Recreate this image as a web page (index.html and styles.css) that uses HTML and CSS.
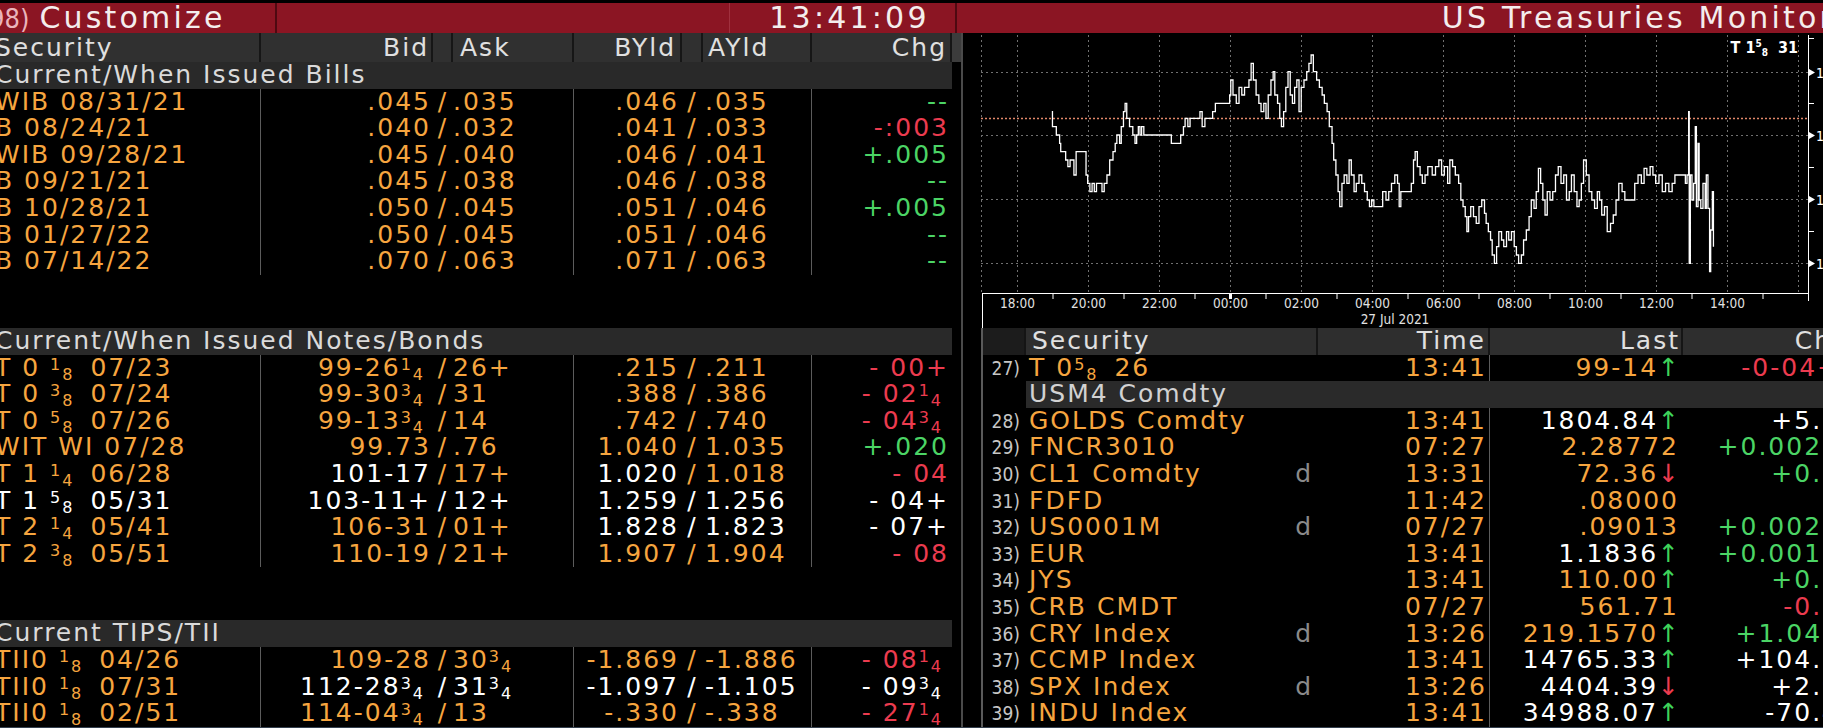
FILE: index.html
```html
<!DOCTYPE html>
<html>
<head>
<meta charset="utf-8">
<title>US Treasuries Monitor</title>
<link rel="stylesheet" href="styles.css">
</head>
<body>
<div class="topbar">
  <div class="seg seg1"><span class="ref">98)</span><span class="ttl">Customize</span></div>
  <div class="seg seg2"></div>
  <div class="seg seg3">13:41:09</div>
  <div class="seg seg4">US Treasuries Monitor</div>
</div>
<div class="main">
  <div class="left">
    <div class="lhead">
      <div class="h-sec">Security</div><div class="h-bid">Bid</div><div class="h-gap"></div><div class="h-ask">Ask</div><div class="h-by">BYld</div><div class="h-gap"></div><div class="h-ay">AYld</div><div class="h-chg">Chg</div><div class="h-strip"></div>
    </div>

    <div class="lsec">Current/When Issued Bills</div>
    <div class="lrow"><div class="sec">WIB 08/31/21</div><div class="bid">.045</div><div class="sl">/</div><div class="ask">.035</div><div class="by">.046</div><div class="sl">/</div><div class="ay">.035</div><div class="chg g">--</div></div>
    <div class="lrow"><div class="sec">B 08/24/21</div><div class="bid">.040</div><div class="sl">/</div><div class="ask">.032</div><div class="by">.041</div><div class="sl">/</div><div class="ay">.033</div><div class="chg r">-:003</div></div>
    <div class="lrow"><div class="sec">WIB 09/28/21</div><div class="bid">.045</div><div class="sl">/</div><div class="ask">.040</div><div class="by">.046</div><div class="sl">/</div><div class="ay">.041</div><div class="chg g">+.005</div></div>
    <div class="lrow"><div class="sec">B 09/21/21</div><div class="bid">.045</div><div class="sl">/</div><div class="ask">.038</div><div class="by">.046</div><div class="sl">/</div><div class="ay">.038</div><div class="chg g">--</div></div>
    <div class="lrow"><div class="sec">B 10/28/21</div><div class="bid">.050</div><div class="sl">/</div><div class="ask">.045</div><div class="by">.051</div><div class="sl">/</div><div class="ay">.046</div><div class="chg g">+.005</div></div>
    <div class="lrow"><div class="sec">B 01/27/22</div><div class="bid">.050</div><div class="sl">/</div><div class="ask">.045</div><div class="by">.051</div><div class="sl">/</div><div class="ay">.046</div><div class="chg g">--</div></div>
    <div class="lrow"><div class="sec">B 07/14/22</div><div class="bid">.070</div><div class="sl">/</div><div class="ask">.063</div><div class="by">.071</div><div class="sl">/</div><div class="ay">.063</div><div class="chg g">--</div></div>
    <div class="lgap"></div>

    <div class="lsec">Current/When Issued Notes/Bonds</div>
    <div class="lrow"><div class="sec">T 0 <span class="fr"><i>1</i><b>8</b></span> 07/23</div><div class="bid">99-26<span class="fr"><i>1</i><b>4</b></span></div><div class="sl">/</div><div class="ask">26+</div><div class="by">.215</div><div class="sl">/</div><div class="ay">.211</div><div class="chg r">- 00+</div></div>
    <div class="lrow"><div class="sec">T 0 <span class="fr"><i>3</i><b>8</b></span> 07/24</div><div class="bid">99-30<span class="fr"><i>3</i><b>4</b></span></div><div class="sl">/</div><div class="ask">31</div><div class="by">.388</div><div class="sl">/</div><div class="ay">.386</div><div class="chg r">- 02<span class="fr"><i>1</i><b>4</b></span></div></div>
    <div class="lrow"><div class="sec">T 0 <span class="fr"><i>5</i><b>8</b></span> 07/26</div><div class="bid">99-13<span class="fr"><i>3</i><b>4</b></span></div><div class="sl">/</div><div class="ask">14</div><div class="by">.742</div><div class="sl">/</div><div class="ay">.740</div><div class="chg r">- 04<span class="fr"><i>3</i><b>4</b></span></div></div>
    <div class="lrow"><div class="sec">WIT WI 07/28</div><div class="bid">99.73</div><div class="sl">/</div><div class="ask">.76</div><div class="by">1.040</div><div class="sl">/</div><div class="ay">1.035</div><div class="chg g">+.020</div></div>
    <div class="lrow"><div class="sec">T 1 <span class="fr"><i>1</i><b>4</b></span> 06/28</div><div class="bid w">101-17</div><div class="sl">/</div><div class="ask">17+</div><div class="by w">1.020</div><div class="sl">/</div><div class="ay">1.018</div><div class="chg r">- 04</div></div>
    <div class="lrow"><div class="sec w">T 1 <span class="fr"><i>5</i><b>8</b></span> 05/31</div><div class="bid w">103-11+</div><div class="sl w">/</div><div class="ask w">12+</div><div class="by w">1.259</div><div class="sl w">/</div><div class="ay w">1.256</div><div class="chg w">- 04+</div></div>
    <div class="lrow"><div class="sec">T 2 <span class="fr"><i>1</i><b>4</b></span> 05/41</div><div class="bid">106-31</div><div class="sl">/</div><div class="ask">01+</div><div class="by w">1.828</div><div class="sl w">/</div><div class="ay w">1.823</div><div class="chg w">- 07+</div></div>
    <div class="lrow"><div class="sec">T 2 <span class="fr"><i>3</i><b>8</b></span> 05/51</div><div class="bid">110-19</div><div class="sl">/</div><div class="ask">21+</div><div class="by">1.907</div><div class="sl">/</div><div class="ay">1.904</div><div class="chg r">- 08</div></div>
    <div class="lgap"></div>

    <div class="lsec">Current TIPS/TII</div>
    <div class="lrow"><div class="sec">TII0 <span class="fr"><i>1</i><b>8</b></span> 04/26</div><div class="bid">109-28</div><div class="sl">/</div><div class="ask">30<span class="fr"><i>3</i><b>4</b></span></div><div class="by">-1.869</div><div class="sl">/</div><div class="ay">-1.886</div><div class="chg r">- 08<span class="fr"><i>1</i><b>4</b></span></div></div>
    <div class="lrow"><div class="sec">TII0 <span class="fr"><i>1</i><b>8</b></span> 07/31</div><div class="bid w">112-28<span class="fr"><i>3</i><b>4</b></span></div><div class="sl w">/</div><div class="ask w">31<span class="fr"><i>3</i><b>4</b></span></div><div class="by w">-1.097</div><div class="sl w">/</div><div class="ay w">-1.105</div><div class="chg w">- 09<span class="fr"><i>3</i><b>4</b></span></div></div>
    <div class="lrow"><div class="sec">TII0 <span class="fr"><i>1</i><b>8</b></span> 02/51</div><div class="bid">114-04<span class="fr"><i>3</i><b>4</b></span></div><div class="sl">/</div><div class="ask">13</div><div class="by">-.330</div><div class="sl">/</div><div class="ay">-.338</div><div class="chg r">- 27<span class="fr"><i>1</i><b>4</b></span></div></div>
  </div>

  <div class="right">
    <svg class="chart" width="860" height="295" viewBox="0 0 860 295">
      <g class="grid">
        <line x1="18.5" y1="2" x2="18.5" y2="260"/>
        <line x1="54.5" y1="2" x2="54.5" y2="260"/>
        <line x1="125.5" y1="2" x2="125.5" y2="260"/>
        <line x1="196.5" y1="2" x2="196.5" y2="260"/>
        <line x1="267.5" y1="2" x2="267.5" y2="260"/>
        <line x1="338.5" y1="2" x2="338.5" y2="260"/>
        <line x1="409.5" y1="2" x2="409.5" y2="260"/>
        <line x1="480.5" y1="2" x2="480.5" y2="260"/>
        <line x1="551.5" y1="2" x2="551.5" y2="260"/>
        <line x1="622.5" y1="2" x2="622.5" y2="260"/>
        <line x1="693.5" y1="2" x2="693.5" y2="260"/>
        <line x1="764.5" y1="2" x2="764.5" y2="260"/>
        <line x1="835.5" y1="2" x2="835.5" y2="260"/>
        <line x1="18" y1="39.5" x2="845" y2="39.5"/>
        <line x1="18" y1="102.5" x2="845" y2="102.5"/>
        <line x1="18" y1="166.5" x2="845" y2="166.5"/>
        <line x1="18" y1="230.5" x2="845" y2="230.5"/>
      </g>
      <line class="prev" x1="18" y1="85.5" x2="845" y2="85.5"/>
      <path class="price" transform="matrix(0.55036 0 0 0.33333 -3 -33)" d="M168 333 V380 H175 V405 H181 V430 H183 V455 H192 V480 H196 V500 H200 V480 H207 V525 H211 V455 H229 V525 H232 V550 H236 V575 H240 V550 H244 V575 H248 V550 H258 V575 H262 V550 H267 V525 H272 V480 H278 V455 H282 V430 H285 V405 H290 V430 H293 V380 H297 V335 H300 V310 H303 V355 H308 V380 H314 V405 H318 V430 H321 V405 H324 V380 H327 V405 H330 V380 H334 V405 H384 V430 H401 V405 H406 V380 H409 V355 H414 V380 H418 V355 H436 V335 H440 V380 H445 V355 H459 V335 H464 V310 H490 V285 H492 V240 H496 V285 H502 V310 H507 V262 H512 V285 H517 V262 H525 V240 H529 V190 H533 V240 H538 V285 H543 V310 H547 V335 H552 V310 H556 V355 H560 V285 H565 V240 H569 V215 H572 V285 H577 V310 H581 V355 H584 V380 H588 V335 H592 V262 H596 V215 H600 V285 H604 V310 H608 V262 H612 V240 H616 V335 H620 V262 H625 V240 H630 V215 H634 V190 H638 V165 H642 V215 H648 V240 H653 V262 H658 V285 H662 V310 H667 V335 H671 V380 H676 V430 H679 V480 H683 V525 H687 V575 H690 V620 H694 V550 H698 V525 H703 V550 H707 V480 H711 V525 H716 V575 H720 V550 H725 V525 H730 V550 H735 V575 H740 V600 H744 V620 H748 V600 H752 V620 H768 V575 H774 V600 H779 V575 H784 V550 H790 V525 H795 V550 H798 V620 H801 V575 H820 V550 H824 V480 H827 V455 H831 V500 H836 V525 H840 V550 H845 V525 H850 V500 H858 V525 H864 V500 H870 V480 H875 V525 H880 V500 H886 V550 H890 V480 H895 V500 H900 V525 H906 V550 H910 V600 H914 V620 H918 V650 H921 V695 H924 V650 H928 V620 H933 V650 H938 V670 H943 V620 H948 V600 H953 V640 H956 V670 H960 V695 H964 V720 H967 V765 H971 V790 H975 V740 H979 V695 H984 V720 H988 V740 H993 V695 H997 V720 H1002 V695 H1007 V740 H1011 V765 H1015 V790 H1020 V765 H1024 V720 H1029 V690 H1034 V650 H1038 V600 H1043 V625 H1047 V575 H1051 V505 H1055 V550 H1059 V600 H1063 V645 H1067 V575 H1072 V600 H1077 V575 H1082 V525 H1087 V500 H1092 V550 H1097 V525 H1102 V600 H1107 V575 H1111 V525 H1116 V575 H1121 V620 H1125 V600 H1129 V550 H1133 V480 H1138 V525 H1143 V575 H1148 V600 H1153 V625 H1158 V575 H1162 V600 H1166 V645 H1171 V620 H1176 V695 H1182 V670 H1187 V645 H1192 V600 H1197 V550 H1203 V575 H1208 V600 H1226 V550 H1232 V525 H1238 V550 H1243 V505 H1248 V525 H1254 V500 H1259 V525 H1264 V550 H1270 V525 H1276 V575 H1282 V550 H1288 V575 H1294 V550 H1299 V525 H1318 V550 H1321 V525 H1324 V335 H1325 V790 H1327 V525 H1330 V600 H1333 V550 H1336 V380 H1338 V620 H1341 V430 H1343 V600 H1346 V625 H1350 V550 H1354 V625 H1356 V525 H1359 V625 H1362 V815 H1364 V690 H1367 V575 H1369 V740"/>
      <g class="axis">
        <line x1="845.5" y1="2" x2="845.5" y2="261"/>
        <line x1="845.5" y1="5.5" x2="851" y2="5.5"/>
        <line x1="845.5" y1="70.5" x2="851" y2="70.5"/>
        <line x1="845.5" y1="134.5" x2="851" y2="134.5"/>
        <line x1="845.5" y1="198.5" x2="851" y2="198.5"/>
        <line x1="19" y1="260.5" x2="846" y2="260.5"/>
        <line x1="19.5" y1="260" x2="19.5" y2="295"/>
        <line x1="845.5" y1="260" x2="845.5" y2="268"/>
        <line x1="90" y1="260" x2="90" y2="266"/>
        <line x1="161" y1="260" x2="161" y2="266"/>
        <line x1="232" y1="260" x2="232" y2="266"/>
        <line x1="303" y1="260" x2="303" y2="266"/>
        <line x1="374" y1="260" x2="374" y2="266"/>
        <line x1="445" y1="260" x2="445" y2="266"/>
        <line x1="516" y1="260" x2="516" y2="266"/>
        <line x1="587" y1="260" x2="587" y2="266"/>
        <line x1="658" y1="260" x2="658" y2="266"/>
        <line x1="729" y1="260" x2="729" y2="266"/>
        <line x1="800" y1="260" x2="800" y2="266"/>
      </g>
      <rect x="266" y="260" width="3" height="6" fill="#fff"/>
      <g class="tri">
        <polygon points="846,36 852,39.5 846,43"/>
        <polygon points="846,99 852,102.5 846,106"/>
        <polygon points="846,163 852,166.5 846,170"/>
        <polygon points="846,227 852,230.5 846,234"/>
      </g>
      <g class="ylab">
        <text x="853" y="45">1</text>
        <text x="853" y="108">1</text>
        <text x="853" y="172">1</text>
        <text x="853" y="236">1</text>
      </g>
      <g class="xlab">
        <text x="54.5" y="275">18:00</text>
        <text x="125.5" y="275">20:00</text>
        <text x="196.5" y="275">22:00</text>
        <text x="267.5" y="275">00:00</text>
        <text x="338.5" y="275">02:00</text>
        <text x="409.5" y="275">04:00</text>
        <text x="480.5" y="275">06:00</text>
        <text x="551.5" y="275">08:00</text>
        <text x="622.5" y="275">10:00</text>
        <text x="693.5" y="275">12:00</text>
        <text x="764.5" y="275">14:00</text>
        <text x="432" y="291">27 Jul 2021</text>
      </g>
      <text class="sym" x="835" y="20">T 1<tspan class="sfr" dy="-6">5</tspan><tspan class="sfr" dy="9">8</tspan><tspan dy="-3">&#160;&#160;31</tspan></text>
    </svg>

    <div class="rtable">
      <div class="rhead"><div class="num"></div><div class="rsec">Security</div><div class="time">Time</div><div class="last">Last</div><div class="rchg">Chg</div></div>
      <div class="rrow"><div class="num">27)</div><div class="rsec"><span>T 0<span class="fr"><i>5</i><b>8</b></span> 26</span></div><div class="time">13:41</div><div class="last">99-14<span class="up">↑</span></div><div class="rchg r">-0-04+</div></div>
      <div class="rrow grp"><div class="num"></div><div class="rgrp">USM4 Comdty</div></div>
      <div class="rrow"><div class="num">28)</div><div class="rsec"><span>GOLDS Comdty</span></div><div class="time">13:41</div><div class="last w">1804.84<span class="up">↑</span></div><div class="rchg w">+5.7</div></div>
      <div class="rrow"><div class="num">29)</div><div class="rsec"><span>FNCR3010</span></div><div class="time">07:27</div><div class="last">2.28772</div><div class="rchg g">+0.0026</div></div>
      <div class="rrow"><div class="num">30)</div><div class="rsec"><span>CL1 Comdty</span><span class="dd">d</span></div><div class="time">13:31</div><div class="last">72.36<span class="dn">↓</span></div><div class="rchg g">+0.7</div></div>
      <div class="rrow"><div class="num">31)</div><div class="rsec"><span>FDFD</span></div><div class="time">11:42</div><div class="last">.08000</div><div class="rchg"></div></div>
      <div class="rrow"><div class="num">32)</div><div class="rsec"><span>US0001M</span><span class="dd">d</span></div><div class="time">07/27</div><div class="last">.09013</div><div class="rchg g">+0.0028</div></div>
      <div class="rrow"><div class="num">33)</div><div class="rsec"><span>EUR</span></div><div class="time">13:41</div><div class="last w">1.1836<span class="up">↑</span></div><div class="rchg g">+0.0011</div></div>
      <div class="rrow"><div class="num">34)</div><div class="rsec"><span>JYS</span></div><div class="time">13:41</div><div class="last">110.00<span class="up">↑</span></div><div class="rchg g">+0.2</div></div>
      <div class="rrow"><div class="num">35)</div><div class="rsec"><span>CRB CMDT</span></div><div class="time">07/27</div><div class="last">561.71</div><div class="rchg r">-0.0</div></div>
      <div class="rrow"><div class="num">36)</div><div class="rsec"><span>CRY Index</span><span class="dd">d</span></div><div class="time">13:26</div><div class="last">219.1570<span class="up">↑</span></div><div class="rchg g">+1.048</div></div>
      <div class="rrow"><div class="num">37)</div><div class="rsec"><span>CCMP Index</span></div><div class="time">13:41</div><div class="last w">14765.33<span class="up">↑</span></div><div class="rchg w">+104.7</div></div>
      <div class="rrow"><div class="num">38)</div><div class="rsec"><span>SPX Index</span><span class="dd">d</span></div><div class="time">13:26</div><div class="last w">4404.39<span class="dn">↓</span></div><div class="rchg w">+2.9</div></div>
      <div class="rrow"><div class="num">39)</div><div class="rsec"><span>INDU Index</span></div><div class="time">13:41</div><div class="last w">34988.07<span class="up">↑</span></div><div class="rchg w">-70.4</div></div>
    </div>
  </div>
</div>
</body>
</html>
```

FILE: styles.css
```css
* { box-sizing: border-box; }

body {
  margin: 0;
  width: 1823px;
  height: 728px;
  overflow: hidden;
  background: #000;
  font-family: "DejaVu Sans", Verdana, sans-serif;
  font-size: 25px;
  letter-spacing: 2px;
  color: #f6a53f;
}

.o { color: #f6a53f; }
.w { color: #ffffff; }
.g { color: #4bd465; }
.r { color: #ec3b4f; }

/* ---------- top bar ---------- */
.topbar {
  margin-top: 3px;
  height: 30px;
  display: flex;
  background: #8b1523;
  color: #f4eded;
  font-size: 30px;
  letter-spacing: 3.2px;
  line-height: 30px;
  white-space: nowrap;
}
.seg { overflow: hidden; }
.seg1 { width: 277px; border-right: 2px solid #4e0911; }
.ref {
  display: inline-block;
  margin-left: -11px;
  font-family: "DejaVu Sans Condensed", "DejaVu Sans", sans-serif;
  font-size: 27px;
  letter-spacing: 0;
  color: #eab4bb;
}
.ttl { margin-left: 10px; }
.seg2 { width: 453px; border-right: 1px solid #a0303e; }
.seg3 { width: 227px; padding-left: 14px; text-align: center; border-right: 2px solid #4e0911; }
.seg4 { flex: 1; text-align: right; margin-right: -12px; }

/* ---------- layout ---------- */
.main {
  display: flex;
  height: 695px;
  border-bottom: 1px solid #34404e;
}

/* ---------- left table ---------- */
.left {
  width: 963px;
  border-right: 2px solid #4a4a4a;
  overflow: hidden;
}

.lhead, .lrow {
  display: grid;
  grid-template-columns: 261px 172px 20px 121px 108px 21px 109px 140px;
  white-space: nowrap;
}
.lhead {
  grid-template-columns: 261px 172px 20px 121px 108px 21px 109px 140px 9px;
  height: 29px;
  line-height: 29px;
  background: #303030;
  color: #e0e0e0;
}
.lhead > div { border-right: 2px solid #161616; overflow: hidden; }
.h-sec { text-indent: -5px; }
.h-bid { text-align: right; padding-right: 2px; }
.h-ask { padding-left: 7px; }
.h-by { text-align: right; padding-right: 4px; }
.h-ay { padding-left: 5px; }
.h-chg { text-align: right; padding-right: 3px; }
.lhead > .h-strip { background: #3c3c3c; border-right: none; }

.lsec {
  width: 952px;
  height: 26.6px;
  line-height: 26.6px;
  background: #292929;
  color: #dadada;
  text-indent: -5px;
  white-space: nowrap;
  overflow: hidden;
}
.lrow { height: 26.6px; line-height: 26.6px; }
.lrow > div { overflow: hidden; }
.lgap { height: 53.2px; }

.sec { text-indent: -5px; border-right: 1px solid #5c5c5c; }
.bid { text-align: right; padding-right: 2px; }
.sl { text-align: center; }
.ask { border-right: 1px solid #5c5c5c; }
.by { text-align: right; padding-right: 3px; }
.ay { padding-left: 2px; border-right: 1px solid #5c5c5c; }
.chg { text-align: right; padding-right: 3px; }

/* fractions */
.fr {
  display: inline-block;
  font-size: 16px;
  letter-spacing: 0;
  line-height: 14px;
  margin-right: 8px;
  text-indent: 0;
}
.fr i { font-style: normal; position: relative; top: -6px; }
.fr b { font-weight: normal; position: relative; top: 4px; margin-left: 2px; }

/* ---------- right panel ---------- */
.right {
  flex: 1;
  overflow: hidden;
  display: flex;
  flex-direction: column;
}
.chart { display: block; flex: none; letter-spacing: 0; }
.grid line { stroke: #707070; stroke-width: 1; stroke-dasharray: 2 3; }
.prev { stroke: #e2886a; stroke-width: 1.5; stroke-dasharray: 2 2; }
.price { fill: none; stroke: #ffffff; stroke-width: 1.3; vector-effect: non-scaling-stroke; }
.axis line { stroke: #ffffff; stroke-width: 1; }
.tri polygon { fill: #ffffff; }
.ylab text, .xlab text {
  font-family: "DejaVu Sans Condensed", "DejaVu Sans", sans-serif;
  font-size: 13.5px;
  fill: #e2e2e2;
}
.ylab text { font-size: 14px; fill: #ffffff; }
.xlab text { text-anchor: middle; }
.sym {
  font-family: "DejaVu Sans Condensed", "DejaVu Sans", sans-serif;
  font-weight: bold;
  font-size: 16px;
  fill: #ffffff;
  text-anchor: end;
}
.sfr { font-size: 10px; }

.rtable {
  margin-left: 18px;
  width: 869px;
  border-left: 2px solid #5a5a5a;
  flex: none;
}
.rhead, .rrow {
  display: grid;
  grid-template-columns: 43px 292px 172px 193px 167px;
  height: 26.6px;
  line-height: 26.6px;
  white-space: nowrap;
}
.rhead { background: #2e2e2e; color: #e0e0e0; }
.rhead > div { border-right: 2px solid #151515; overflow: hidden; }
.rhead > .num { background: #1c1c1c; }
.rhead > .rsec { padding-left: 6px; }
.rhead > .time { text-align: right; padding-right: 2px; border-right: 2px solid #151515; }
.rhead > .last { text-align: right; padding-right: 1px; }
.rhead > .rchg { text-align: right; padding-right: 0; border-right: none; }

.rrow > div { overflow: hidden; }
.num {
  text-align: right;
  padding-right: 6px;
  font-family: "DejaVu Sans Condensed", "DejaVu Sans", sans-serif;
  font-size: 19px;
  letter-spacing: 0;
  color: #c6c6c6;
}
.rsec { display: flex; justify-content: space-between; padding-left: 3px; padding-right: 5px; }
.dd { color: #8a8a8a; }
.time { text-align: right; padding-right: 2px; border-right: 1px solid #5c5c5c; }
.last { text-align: right; padding-right: 4px; }
.rchg { text-align: right; padding-right: 10px; }
.up { color: #3fd35a; letter-spacing: 0; }
.dn { color: #ec3b4f; letter-spacing: 0; }

.rgrp {
  grid-column: 2 / 6;
  background: #2a2a2a;
  color: #d2d2d2;
  padding-left: 3px;
}
```
